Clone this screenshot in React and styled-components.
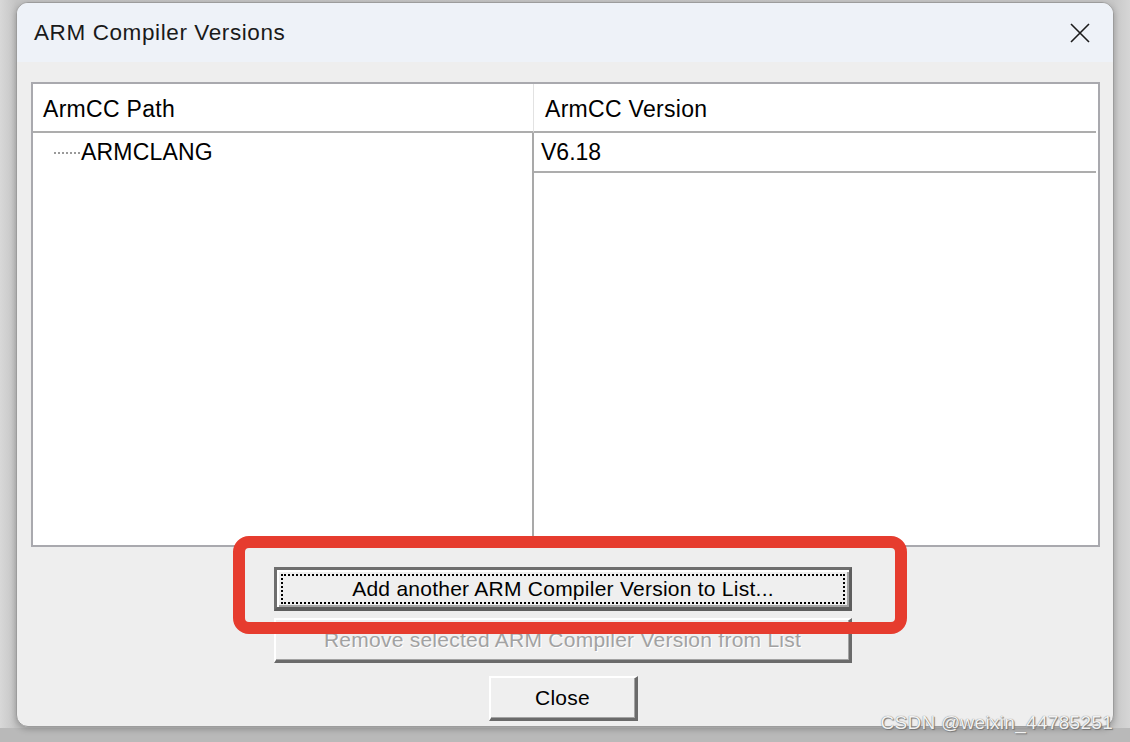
import React from 'react';
import styled, { createGlobalStyle } from 'styled-components';

const GlobalStyle = createGlobalStyle`
  html, body {
    margin: 0;
    padding: 0;
  }
  body {
    width: 1130px;
    height: 742px;
    overflow: hidden;
    font-family: "Liberation Sans", Arial, sans-serif;
    background: linear-gradient(90deg, #d8d8d8 0px, #c4c4c4 16px, #c8c8c8 1114px, #d6d6d6 1130px);
  }
`;

const Page = styled.div`
  position: relative;
  width: 1130px;
  height: 742px;
  box-sizing: border-box;
  padding: 2px 16px 0 16px;
  border-bottom: 14px solid #b9b9b9;
`;

const Dialog = styled.div`
  position: relative;
  width: 1098px;
  height: 725px;
  box-sizing: border-box;
  display: flex;
  flex-direction: column;
  background: #eeeeee;
  border: 1px solid #9c9c9c;
  border-radius: 12px;
  overflow: hidden;
  box-shadow: 0 2px 6px rgba(0, 0, 0, 0.25);
`;

const TitleBar = styled.div`
  height: 59px;
  flex: none;
  display: flex;
  align-items: center;
  justify-content: space-between;
  padding: 0 22px 0 17px;
  background: #eef2f8;
`;

const Title = styled.h1`
  margin: 0;
  font-family: "Liberation Sans", Arial, sans-serif;
  font-weight: normal;
  font-size: 22.5px;
  letter-spacing: 0.6px;
  color: #1a1a1a;
  padding-bottom: 0;
`;

const CloseGlyph = styled.svg`
  width: 22px;
  height: 22px;
  display: block;
`;

const Body = styled.div`
  flex: 1;
  display: flex;
  flex-direction: column;
  align-items: center;
  padding: 20px 13px 0 14px;
`;

const ListBox = styled.div`
  align-self: stretch;
  height: 465px;
  box-sizing: border-box;
  border: 2px solid #a9a9ae;
  background: #fff;
  padding-right: 2px;
  display: grid;
  grid-template-columns: 501px 1fr;
  grid-template-rows: 49px 1fr;
`;

const HeaderCell = styled.div`
  display: flex;
  align-items: center;
  padding-left: ${p => p.$pad}px;
  font-size: 23px;
  letter-spacing: 0.3px;
  color: #000;
  border-bottom: 2px solid #adadad;
  border-right: ${p => (p.$divider ? '1px solid #e2e2e2' : 'none')};
  padding-top: 4px;
`;

const BodyCell = styled.div`
  border-right: ${p => (p.$divider ? '2px solid #a9a9a9' : 'none')};
`;

const TreeRow = styled.div`
  height: 38px;
  display: flex;
  align-items: center;
  padding-left: 21px;
  font-size: 23px;
  letter-spacing: 0.2px;
  color: #000;
`;

const TreeLine = styled.span`
  width: 26px;
  border-top: 2px dotted #9a9a9a;
  margin-right: 1px;
  margin-top: 2px;
`;

const VersionRow = styled.div`
  height: 38px;
  display: flex;
  align-items: center;
  padding-left: 7px;
  font-size: 23px;
  color: #000;
  border-bottom: 2px solid #adadad;
`;

const Buttons = styled.div`
  display: flex;
  flex-direction: column;
  align-items: center;
  margin-top: 20px;
  margin-left: -5px;
`;

const Button = styled.button`
  width: ${p => p.$w}px;
  height: ${p => p.$h}px;
  margin-top: ${p => p.$mt}px;
  box-sizing: border-box;
  background: #efefef;
  font-family: "Liberation Sans", Arial, sans-serif;
  font-size: 21px;
  letter-spacing: 0.25px;
  color: #000;
  padding: 0;
  border-style: solid;
  border-width: 2px 3px 3px 2px;
  border-color: #ffffff #6a6a6a #6a6a6a #ffffff;
  box-shadow: inset -1px -1px 0 #a3a3a3;

  &[data-default='true'] {
    border-width: 3px 3px 4px 3px;
    border-color: #6e6e6e #5e5e5e #5e5e5e #6e6e6e;
    box-shadow: inset 2px 2px 0 #fff, inset -2px -2px 0 #a3a3a3;
    outline: 2px dotted #000;
    outline-offset: -9px;
  }

  &:disabled {
    color: #a2a2a2;
    text-shadow: 1px 1px 0 #fff;
  }
`;

const Annotation = styled.div`
  position: absolute;
  left: 216px;
  top: 533px;
  width: 674px;
  height: 98px;
  box-sizing: border-box;
  border: 12px solid #e63c2e;
  border-radius: 16px;
  pointer-events: none;
`;

const Watermark = styled.div`
  position: absolute;
  right: 17px;
  bottom: -6px;
  font-family: "Liberation Sans", Arial, sans-serif;
  font-size: 19px;
  color: #f2f2f2;
  text-shadow: 0 0 1px #666, 1px 1px 1px #777;
  letter-spacing: 0.3px;
`;

export default function App() {
  return (
    <>
      <GlobalStyle />
      <Page>
        <Dialog>
          <TitleBar>
            <Title>ARM Compiler Versions</Title>
            <CloseGlyph viewBox="0 0 22 22">
              <path d="M2 2 L20 20 M20 2 L2 20" stroke="#1b1b1b" strokeWidth="1.6" fill="none" />
            </CloseGlyph>
          </TitleBar>
          <Body>
            <ListBox>
              <HeaderCell $pad={10} $divider>ArmCC Path</HeaderCell>
              <HeaderCell $pad={11}>ArmCC Version</HeaderCell>
              <BodyCell $divider>
                <TreeRow>
                  <TreeLine />
                  ARMCLANG
                </TreeRow>
              </BodyCell>
              <BodyCell>
                <VersionRow>V6.18</VersionRow>
              </BodyCell>
            </ListBox>
            <Buttons>
              <Button $w={578} $h={44} $mt={0} data-default="true">
                Add another ARM Compiler Version to List...
              </Button>
              <Button $w={578} $h={45} $mt={7} disabled>
                Remove selected ARM Compiler Version from List
              </Button>
              <Button $w={149} $h={45} $mt={13}>
                Close
              </Button>
            </Buttons>
          </Body>
          <Annotation />
        </Dialog>
        <Watermark>CSDN @weixin_44785251</Watermark>
      </Page>
    </>
  );
}
